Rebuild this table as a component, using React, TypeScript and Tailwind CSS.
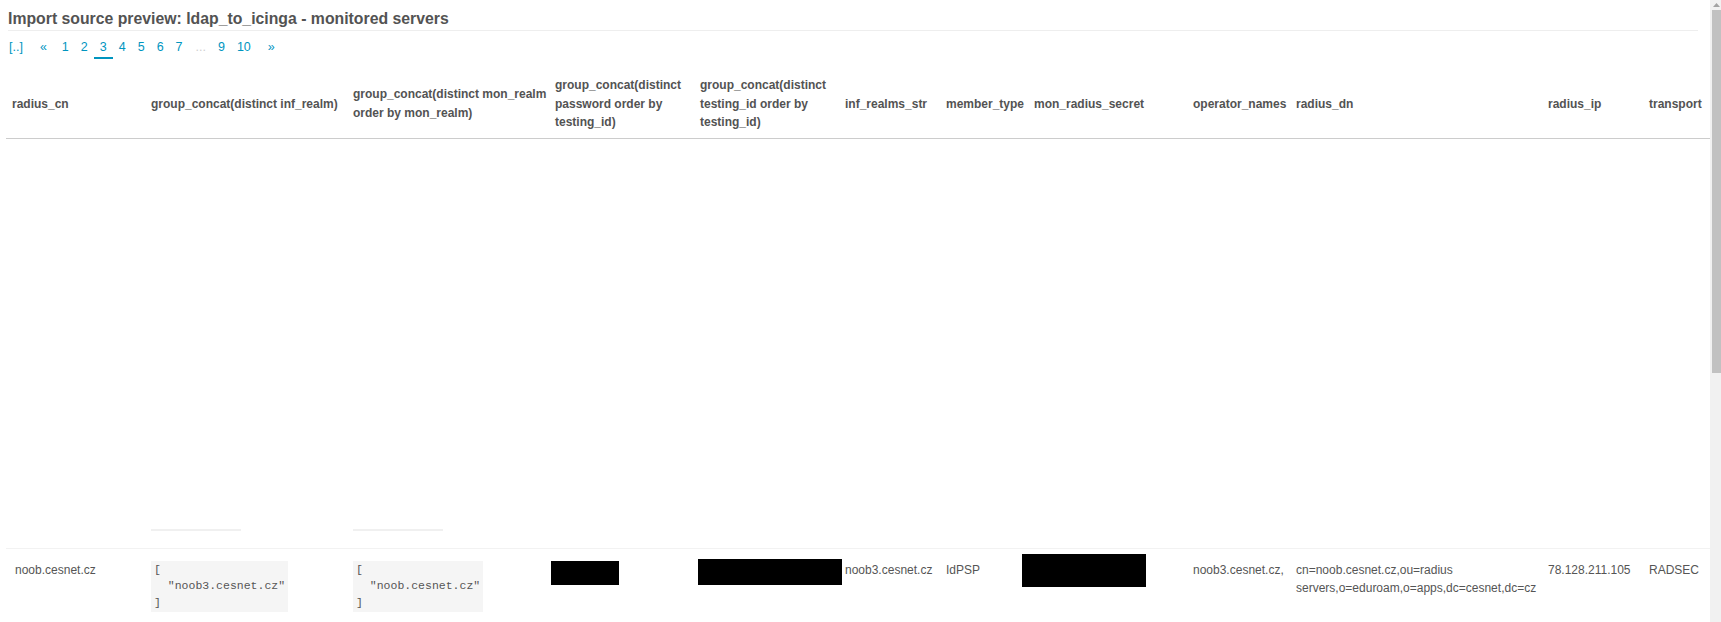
import React from 'react';

const headers = [
  'radius_cn',
  'group_concat(distinct inf_realm)',
  'group_concat(distinct mon_realm order by mon_realm)',
  'group_concat(distinct password order by testing_id)',
  'group_concat(distinct testing_id order by testing_id)',
  'inf_realms_str',
  'member_type',
  'mon_radius_secret',
  'operator_names',
  'radius_dn',
  'radius_ip',
  'transport',
];

const cols =
  'grid grid-cols-[139px_202px_202px_145px_145px_101px_88px_159px_103px_252px_101px_67px]';

function JsonPre({ value }: { value: string }) {
  return (
    <pre className="inline-block bg-[#f5f5f5] px-[3px] py-[1px] font-['Liberation_Mono',monospace] text-[11.5px] leading-[16.5px] text-[#555555]">
      {`[\n  "${value}"\n]`}
    </pre>
  );
}

function Pagination() {
  const pages = ['1', '2', '3', '4', '5', '6', '7'];
  return (
    <ul className="ml-[9px] mt-[7px] flex items-start text-[12.5px] leading-[18px] text-[#0095bf]">
      <li className="border-b-2 border-transparent pb-[1px]">[..]</li>
      <li className="ml-[11px] border-b-2 border-transparent px-[6px] pb-[1px]">«</li>
      <li className="ml-[3px] flex">
        {pages.map((p) => (
          <span
            key={p}
            className={`px-[6px] pb-[1px] border-b-2 ${p === '3' ? 'border-[#0095bf]' : 'border-transparent'}`}
          >
            {p}
          </span>
        ))}
      </li>
      <li className="ml-[1px] border-b-2 border-transparent px-[6px] pb-[1px] text-[#cfcfcf]">...</li>
      <li className="border-b-2 border-transparent px-[6px] pb-[1px]">9</li>
      <li className="border-b-2 border-transparent px-[6px] pb-[1px]">10</li>
      <li className="ml-[5px] border-b-2 border-transparent px-[6px] pb-[1px]">»</li>
    </ul>
  );
}

function Scrollbar() {
  return (
    <div className="flex h-[622px] w-[11px] flex-col bg-[#f1f1f1]">
      <div className="flex h-[10px] items-center justify-center pl-[2px]">
        <svg width="7" height="4" viewBox="0 0 7 4">
          <path d="M0 4 L3.5 0 L7 4 Z" fill="#a3a3a3" />
        </svg>
      </div>
      <div className="ml-[2px] h-[363px] bg-[#c1c1c1]" />
    </div>
  );
}

export default function App() {
  return (
    <div className="flex h-[622px] w-[1721px] overflow-hidden bg-white font-['Liberation_Sans',Arial,sans-serif] text-[#535353]">
      <div className="min-w-0 flex-1">
        <h1 className="ml-[8px] mr-[12px] mt-[9px] border-b border-[#eeeeee] pb-[1px] text-[15.8px] font-bold leading-[20px] text-[#535353]">
          Import source preview: ldap_to_icinga - monitored servers
        </h1>

        <Pagination />

        <div className="ml-[6px] mt-[11px] w-[1704px]">
          {/* header */}
          <div className={`${cols} items-center border-b border-[#cccccc]`}>
            {headers.map((h) => (
              <div key={h} className="py-[6px] pl-[6px] text-[12px] font-bold leading-[18.5px] text-[#535353]">
                {h}
              </div>
            ))}
          </div>

          {/* empty first row */}
          <div className={`${cols} h-[409px] items-end`}>
            <div />
            <div className="pl-[6px]">
              <div className="mb-[17px] h-[2px] w-[90px] bg-[#f0f0f0]" />
            </div>
            <div className="pl-[6px]">
              <div className="mb-[17px] h-[2px] w-[90px] bg-[#f0f0f0]" />
            </div>
          </div>

          {/* data row */}
          <div className={`${cols} items-start border-t border-[#f2f2f2] text-[12px] leading-[18px] text-[#555555]`}>
            <div className="pl-[9px] pt-[12px]">noob.cesnet.cz</div>
            <div className="pl-[6px] pt-[12px]">
              <JsonPre value="noob3.cesnet.cz" />
            </div>
            <div className="pl-[6px] pt-[12px]">
              <JsonPre value="noob.cesnet.cz" />
            </div>
            <div className="pl-[6px] pt-[12px]">
              <div className="-ml-[4px] h-[24px] w-[68px] bg-black" />
            </div>
            <div className="pl-[6px] pt-[10px]">
              <div className="-ml-[2px] h-[26px] w-[144px] bg-black" />
            </div>
            <div className="pl-[6px] pt-[12px]">noob3.cesnet.cz</div>
            <div className="pl-[6px] pt-[12px]">IdPSP</div>
            <div className="pl-[6px] pt-[5px]">
              <div className="-ml-[12px] h-[33px] w-[124px] bg-black" />
            </div>
            <div className="pl-[6px] pt-[12px]">noob3.cesnet.cz,</div>
            <div className="pl-[6px] pt-[12px]">
              cn=noob.cesnet.cz,ou=radius servers,o=eduroam,o=apps,dc=cesnet,dc=cz
            </div>
            <div className="pl-[6px] pt-[12px]">78.128.211.105</div>
            <div className="pl-[6px] pt-[12px]">RADSEC</div>
          </div>
        </div>
      </div>
      <Scrollbar />
    </div>
  );
}
